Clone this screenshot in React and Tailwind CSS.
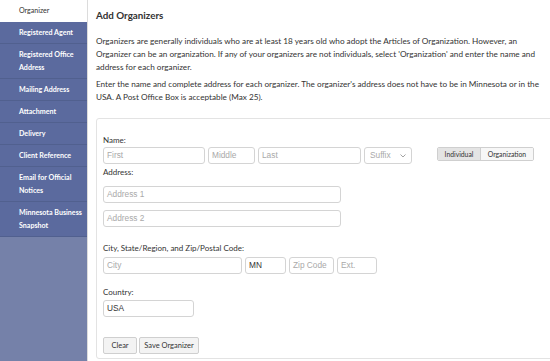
import React from "react";

const navItems = [
  "Registered Agent",
  "Registered Office Address",
  "Mailing Address",
  "Attachment",
  "Delivery",
  "Client Reference",
  "Email for Official Notices",
  "Minnesota Business Snapshot",
];

const Field = ({ placeholder, value, className = "" }) => (
  <div
    className={`h-[17px] border border-[#d4d4d4] rounded-[3px] bg-white flex items-center px-[3px] text-[8.3px] font-['Liberation_Sans',sans-serif] ${
      value ? "text-[#333]" : "text-[#a9a9a9]"
    } ${className}`}
  >
    {value || placeholder}
  </div>
);

const Label = ({ children, className = "" }) => (
  <div className={`text-[8px] leading-[12px] ${className}`}>{children}</div>
);

const App = () => {
  return (
    <div className="w-[550px] h-[361px] overflow-hidden flex bg-white font-['Lato',sans-serif]">
      {/* SIDEBAR */}
      <div className="w-[88px] shrink-0 flex flex-col bg-[#7581a9] border-r border-[#dcdcdc]">
        <div className="h-[22px] bg-white flex items-center pl-[19px] text-[7.1px] text-[#333]">
          Organizer
        </div>
        {navItems.map((item) => (
          <div
            key={item}
            className="bg-[#5b6a9e] border-b border-[#51608f] pl-[19px] pr-0 py-[4px] text-[7.1px] font-bold text-white leading-[13px]"
          >
            {item}
          </div>
        ))}
      </div>

      {/* MAIN */}
      <div className="flex-1 pl-[8px] pt-[9px] text-[#333]">
        <h1 className="text-[9.8px] font-bold leading-[12px]">Add Organizers</h1>
        <p className="mt-[14px] text-[8.2px] leading-[13px] w-[446px]">
          Organizers are generally individuals who are at least 18 years old who adopt the Articles of Organization. However, an
          Organizer can be an organization. If any of your organizers are not individuals, select 'Organization' and enter the name and
          address for each organizer.
        </p>
        <p className="mt-[4px] text-[8.2px] leading-[13px] w-[446px]">
          Enter the name and complete address for each organizer. The organizer's address does not have to be in Minnesota or in the
          USA. A Post Office Box is acceptable (Max 25).
        </p>

        {/* FORM BOX */}
        <div className="mt-[14px] w-[470px] border border-[#e3e3e3] rounded-[3px] pl-[6px] pt-[15px] pb-[4px]">
          <Label>Name:</Label>
          <div className="mt-[1px] flex items-start gap-[3px]">
            <Field placeholder="First" className="w-[102px]" />
            <Field placeholder="Middle" className="w-[47px]" />
            <Field placeholder="Last" className="w-[103px]" />
            <div className="w-[48px] h-[17px] border border-[#d4d4d4] rounded-[3px] flex items-center justify-between px-[5px] text-[8.3px] text-[#a9a9a9] font-['Liberation_Sans',sans-serif]">
              Suffix
              <svg width="6" height="4" viewBox="0 0 6 4" fill="none" stroke="#999" strokeWidth="0.9">
                <path d="M0.5 0.5 L3 3 L5.5 0.5" />
              </svg>
            </div>
            <div className="ml-[22px] flex h-[14px] border border-[#cfcfcf] rounded-[2px] text-[6.8px] overflow-hidden">
              <div className="w-[43px] flex items-center justify-center bg-[#e4e4e4] border-r border-[#cfcfcf]">Individual</div>
              <div className="w-[52px] flex items-center justify-center bg-[#f7f7f7]">Organization</div>
            </div>
          </div>

          <Label className="mt-[2px]">Address:</Label>
          <Field placeholder="Address 1" className="mt-[8px] w-[238px]" />
          <Field placeholder="Address 2" className="mt-[7px] w-[238px]" />

          <Label className="mt-[15px]">City, State/Region, and Zip/Postal Code:</Label>
          <div className="mt-[3px] flex gap-[3px]">
            <Field placeholder="City" className="w-[139px]" />
            <Field value="MN" className="w-[41px]" />
            <Field placeholder="Zip Code" className="w-[45px]" />
            <Field placeholder="Ext." className="w-[40px]" />
          </div>

          <Label className="mt-[12px]">Country:</Label>
          <Field value="USA" className="mt-[2px] w-[91px]" />

          <div className="mt-[20px] flex gap-[2px]">
            <button className="h-[17px] w-[34px] border border-[#cfcfcf] rounded-[2px] bg-[#f3f3f3] text-[7.5px] text-[#333]">Clear</button>
            <button className="h-[17px] w-[60px] border border-[#cfcfcf] rounded-[2px] bg-[#f3f3f3] text-[7.5px] text-[#333]">Save Organizer</button>
          </div>
        </div>
      </div>
    </div>
  );
};

export default App;
